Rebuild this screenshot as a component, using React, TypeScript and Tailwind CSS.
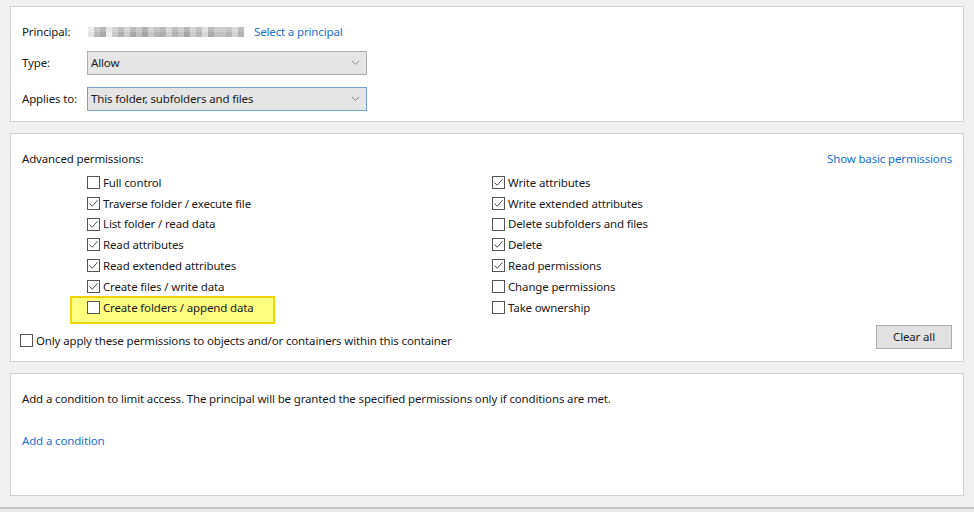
import React from 'react';

const font = { fontFamily: '"Noto Sans", "Open Sans", sans-serif', letterSpacing: '-0.15px' };

const blurTop = [
  '#ececec', '#c9c9c9', '#b9b9b9', '#e6e6e6', '#d4d4d4', '#c2c2c2', '#d8d8d8', '#bdbdbd',
  '#cacaca', '#b4b4b4', '#d2d2d2', '#c6c6c6', '#bbbbbb', '#d9d9d9', '#c0c0c0', '#cfcfcf',
  '#b8b8b8', '#d6d6d6', '#c4c4c4', '#e0e0e0', '#bcbcbc', '#cdcdcd', '#d0d0d0', '#c7c7c7',
  '#dadada', '#bebebe',
];
const blurBottom = [
  '#e4e4e4', '#bababa', '#a9a9a9', '#eeeeee', '#c9c9c9', '#b0b0b0', '#cbcbcb', '#a8a8a8',
  '#bfbfbf', '#a5a5a5', '#c5c5c5', '#b3b3b3', '#aeaeae', '#cecece', '#b1b1b1', '#c2c2c2',
  '#a7a7a7', '#cbcbcb', '#b6b6b6', '#d8d8d8', '#acacac', '#c0c0c0', '#c3c3c3', '#b5b5b5',
  '#d3d3d3', '#b2b2b2',
];

const Check = ({ checked }: { checked: boolean }) => (
  <span className="w-[13px] h-[13px] border border-[#555] bg-white flex items-center justify-center shrink-0">
    {checked && (
      <svg width="11" height="11" viewBox="0 0 11 11">
        <path d="M1.5 5.5 L4.2 8.3 L9.5 2.2" fill="none" stroke="#555" strokeWidth="1" />
      </svg>
    )}
  </span>
);

const Chevron = () => (
  <svg width="9" height="6" viewBox="0 0 9 6" className="mr-[6px]">
    <path d="M1 1 L4.5 4.5 L8 1" fill="none" stroke="#8a8a8a" strokeWidth="1" />
  </svg>
);

const left: [string, boolean][] = [
  ['Full control', false],
  ['Traverse folder / execute file', true],
  ['List folder / read data', true],
  ['Read attributes', true],
  ['Read extended attributes', true],
  ['Create files / write data', true],
  ['Create folders / append data', false],
];

const right: [string, boolean][] = [
  ['Write attributes', true],
  ['Write extended attributes', true],
  ['Delete subfolders and files', false],
  ['Delete', true],
  ['Read permissions', true],
  ['Change permissions', false],
  ['Take ownership', false],
];

const PermRow = ({ label, checked, highlight }: { label: string; checked: boolean; highlight?: boolean }) => (
  <div className="relative h-[20.85px] flex items-center gap-[3px]">
    {highlight && (
      <span className="absolute left-[-17px] top-[-1px] w-[205px] h-[28px] bg-[#ffff80] border-2 border-[#f2d20a]" />
    )}
    <span className="relative flex items-center gap-[3px]">
      <Check checked={checked} />
      <span>{label}</span>
    </span>
  </div>
);

export default function App() {
  return (
    <div
      className="w-[974px] h-[512px] bg-[#f0f0f0] flex flex-col text-[11.5px] text-[#1a1a1a] overflow-hidden"
      style={font}
    >
      <div className="px-[10px] pt-[6px] flex flex-col">
        {/* principal panel */}
        <div className="h-[116px] bg-white border border-[#d0d0d0] pl-[11px] pt-[16px]">
          <div className="flex items-center h-[17px]">
            <span className="w-[67px]">Principal:</span>
            <span className="flex flex-col ml-[-1px]">
              <span className="flex">
                {blurTop.map((c, i) => (
                  <span key={i} className="w-[6px] h-[5px]" style={{ background: c }} />
                ))}
              </span>
              <span className="flex">
                {blurBottom.map((c, i) => (
                  <span key={i} className="w-[6px] h-[5px]" style={{ background: c }} />
                ))}
              </span>
            </span>
            <span className="ml-[10px] text-[#1a6fd1]">Select a principal</span>
          </div>
          <div className="flex items-center mt-[11px] h-[24px]">
            <span className="w-[65px]">Type:</span>
            <div className="w-[280px] h-[24px] bg-[#e5e5e5] border border-[#adadad] flex items-center justify-between pl-[3px]">
              <span>Allow</span>
              <Chevron />
            </div>
          </div>
          <div className="flex items-center mt-[12px] h-[24px]">
            <span className="w-[65px]">Applies to:</span>
            <div className="w-[280px] h-[24px] bg-[#e5e5e5] border border-[#7aa0d4] flex items-center justify-between pl-[3px]">
              <span>This folder, subfolders and files</span>
              <Chevron />
            </div>
          </div>
        </div>

        {/* advanced permissions panel */}
        <div className="mt-[11px] h-[229px] bg-white border border-[#d0d0d0] pl-[9px] pr-[11px] pt-[16px] flex flex-col">
          <div className="flex items-center justify-between h-[17px] pl-[2px]">
            <span>Advanced permissions:</span>
            <span className="text-[#1a6fd1]">Show basic permissions</span>
          </div>
          <div className="flex mt-[5px] pl-[67px]">
            <div className="w-[405px] flex flex-col">
              {left.map(([l, c], i) => (
                <PermRow key={l} label={l} checked={c} highlight={i === 6} />
              ))}
            </div>
            <div className="flex flex-col">
              {right.map(([l, c]) => (
                <PermRow key={l} label={l} checked={c} />
              ))}
            </div>
          </div>
          <div className="flex items-start justify-between mt-[7px]">
            <div className="flex items-center gap-[3px] mt-[7px]">
              <Check checked={false} />
              <span>Only apply these permissions to objects and/or containers within this container</span>
            </div>
            <button className="w-[76px] h-[24px] bg-[#e1e1e1] border border-[#adadad] text-[#1a1a1a]">
              Clear all
            </button>
          </div>
        </div>

        {/* condition panel */}
        <div className="mt-[11px] h-[123px] bg-white border border-[#d0d0d0] pl-[11px] pt-[16px] flex flex-col">
          <span className="h-[17px] flex items-center">
            Add a condition to limit access. The principal will be granted the specified permissions only if conditions are met.
          </span>
          <span className="h-[17px] flex items-center mt-[25px] text-[#1a6fd1]">Add a condition</span>
        </div>
      </div>
      <div className="mt-[11px] h-[2px] bg-[#c6c6c6]" />
      <div className="flex-1 bg-[#e8e8e8]" />
    </div>
  );
}
